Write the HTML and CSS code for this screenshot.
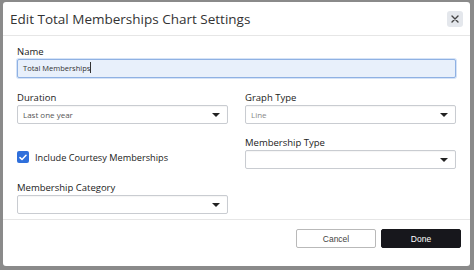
FILE: index.html
```html
<!DOCTYPE html>
<html>
<head>
<meta charset="utf-8">
<link rel="stylesheet" href="styles.css">
</head>
<body>
<div class="dialog">
  <div class="header">
    <div class="title">Edit Total Memberships Chart Settings</div>
    <button class="close" aria-label="Close">
      <svg width="8" height="8" viewBox="0 0 8 8"><path d="M1 1L7 7M7 1L1 7" stroke="#444" stroke-width="1.4" stroke-linecap="round"/></svg>
    </button>
  </div>
  <div class="body">
    <div class="field">
      <div class="label">Name</div>
      <div class="input focused">Total Memberships<span class="caret"></span></div>
    </div>
    <div class="cols">
      <div class="col">
        <div class="field">
          <div class="label">Duration</div>
          <div class="select">Last one year<span class="arrow"></span></div>
        </div>
        <label class="check">
          <span class="box"><svg width="8" height="7" viewBox="0 0 8 7"><path d="M1 3.6L3 5.5L7 1.3" fill="none" stroke="#fff" stroke-width="1.5" stroke-linecap="round" stroke-linejoin="round"/></svg></span>
          <span>Include Courtesy Memberships</span>
        </label>
        <div class="field cat">
          <div class="label">Membership Category</div>
          <div class="select"><span class="arrow"></span></div>
        </div>
      </div>
      <div class="col">
        <div class="field">
          <div class="label">Graph Type</div>
          <div class="select light">Line<span class="arrow"></span></div>
        </div>
        <div class="field mtype">
          <div class="label">Membership Type</div>
          <div class="select"><span class="arrow"></span></div>
        </div>
      </div>
    </div>
  </div>
  <div class="footer">
    <button class="btn cancel">Cancel</button>
    <button class="btn done">Done</button>
  </div>
</div>
</body>
</html>
```
FILE: styles.css
```css
html, body { margin: 0; padding: 0; }
body {
  width: 474px;
  height: 270px;
  background: #8a8a8a;
  font-family: "Open Sans", "Noto Sans", sans-serif;
  overflow: hidden;
}
.dialog {
  margin: 2px 0 0 3px;
  width: 467px;
  height: 264px;
  background: #fff;
  border-radius: 3px;
  display: flex;
  flex-direction: column;
}
.header {
  height: 33px;
  border-bottom: 1px solid #e6e6e6;
  display: flex;
  align-items: center;
  justify-content: space-between;
  padding: 0 7px 0 7px;
}
.title {
  font-size: 13.5px;
  color: #333;
}
.close {
  width: 16px;
  height: 16px;
  border: none;
  border-radius: 3px;
  background: #e4e7ec;
  padding: 0;
  display: flex;
  align-items: center;
  justify-content: center;
}
.body {
  padding: 9px 14px 0 14px;
  flex: 1;
}
.label {
  font-size: 9.5px;
  line-height: 13px;
  height: 13px;
  margin-bottom: 1px;
  color: #222;
}
.input, .select {
  box-sizing: border-box;
  height: 19px;
  border: 1px solid #c9ccd1;
  border-radius: 2px;
  font-size: 8px;
  line-height: 17px;
  padding: 0 5px;
  color: #555;
  position: relative;
  box-shadow: inset 0 1px 1px rgba(0,0,0,0.04);
}
.input.focused {
  background: #e8f0fb;
  border-color: #8fb1e3;
  color: #333;
  font-size: 7.5px;
  box-shadow: 0 0 0 1px #d5e3f7;
}
.caret {
  display: inline-block;
  width: 1px;
  height: 11px;
  background: #333;
  vertical-align: -2px;
}
.select.light { color: #888; }
.arrow {
  position: absolute;
  right: 7px;
  top: 7px;
  width: 0;
  height: 0;
  border-left: 4px solid transparent;
  border-right: 4px solid transparent;
  border-top: 4px solid #222;
}
.cols {
  display: grid;
  grid-template-columns: 211px 211px;
  column-gap: 17px;
  margin-top: 13px;
}
.col { display: flex; flex-direction: column; }
.check {
  display: flex;
  align-items: center;
  gap: 6px;
  margin-top: 27px;
  font-size: 9.2px;
  color: #222;
  height: 12px;
}
.box {
  width: 12px;
  height: 12px;
  border-radius: 2px;
  background: #2f6fdb;
  display: flex;
  align-items: center;
  justify-content: center;
}
.field.cat { margin-top: 18px; }
.field.mtype { margin-top: 12px; }
.footer {
  border-top: 1px solid #e6e6e6;
  height: 37px;
  display: flex;
  justify-content: flex-end;
  align-items: flex-start;
  gap: 5px;
  padding: 9px 9px 0 0;
}
.btn {
  width: 80px;
  height: 19px;
  font-family: "Liberation Sans", Arial, sans-serif;
  font-size: 8.5px;
  border-radius: 2px;
  padding: 0;
}
.cancel {
  background: #fff;
  border: 1px solid #b9b9b9;
  color: #444;
}
.done {
  background: #17171c;
  border: 1px solid #17171c;
  color: #fff;
}
```
